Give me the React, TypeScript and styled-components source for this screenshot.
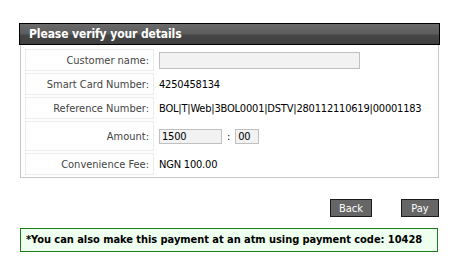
import React from 'react';
import styled, { createGlobalStyle } from 'styled-components';

const GlobalStyle = createGlobalStyle`
  html, body {
    margin: 0;
    padding: 0;
    background: #fff;
  }
  body {
    font-family: "DejaVu Sans Condensed", "DejaVu Sans", Tahoma, sans-serif;
    font-size: 11px;
    color: #000;
  }
`;

const Page = styled.div`
  width: 421px;
  padding: 23px 0 0 19px;
`;

const Header = styled.div`
  height: 20px;
  border: 1px solid #000;
  background: linear-gradient(#6a6a6a 0%, #5c5c5c 50%, #464646 55%, #3f3f3f 100%);
  color: #fff;
  font-weight: bold;
  font-size: 12px;
  line-height: 20px;
  padding-left: 9px;
  letter-spacing: -0.1px;
`;

const Box = styled.div`
  margin: 0 1px;
  border: 1px solid #c8c8c8;
  border-top: none;
  padding: 4px 3px 2px 4px;
  display: grid;
  grid-template-columns: 129px 1fr;
  column-gap: 5px;
  row-gap: 2px;
`;

const Label = styled.div<{ $tall?: boolean }>`
  border: 1px solid #ececec;
  height: ${p => (p.$tall ? 28 : 20)}px;
  display: flex;
  align-items: center;
  justify-content: flex-end;
  padding-right: 4px;
  color: #444;
`;

const Value = styled.div`
  display: flex;
  align-items: center;
  gap: 5px;
  color: #000;
  letter-spacing: -0.2px;
`;

const Field = styled.div<{ $w: number; $h?: number }>`
  width: ${p => p.$w}px;
  height: ${p => p.$h ?? 14}px;
  border: 1px solid #c0c0c0;
  background: #f2f2f2;
  display: flex;
  align-items: center;
  padding-left: 2px;
  box-sizing: border-box;
`;

const Actions = styled.div`
  display: flex;
  justify-content: flex-end;
  gap: 29px;
  margin: 21px 1px 0 0;
`;

const Button = styled.div<{ $w: number }>`
  width: ${p => p.$w}px;
  height: 18px;
  box-sizing: border-box;
  border: 1px solid #1a1a1a;
  background: #666;
  color: #fff;
  display: flex;
  align-items: center;
  justify-content: center;
  font-size: 11px;
`;

const Notice = styled.div`
  margin: 11px 2px 0 1px;
  height: 22px;
  border: 1px solid #1b7d1b;
  background: #efffef;
  font-weight: bold;
  font-size: 11px;
  line-height: 22px;
  padding-left: 5px;
  letter-spacing: -0.05px;
`;

export default function App() {
  return (
    <Page>
      <GlobalStyle />
      <Header>Please verify your details</Header>
      <Box>
        <Label>Customer name:</Label>
        <Value>
          <Field $w={201} $h={17} />
        </Value>
        <Label>Smart Card Number:</Label>
        <Value>4250458134</Value>
        <Label>Reference Number:</Label>
        <Value>BOL|T|Web|3BOL0001|DSTV|280112110619|00001183</Value>
        <Label $tall>Amount:</Label>
        <Value>
          <Field $w={63} $h={15}>1500</Field>
          :
          <Field $w={24} $h={15}>00</Field>
        </Value>
        <Label>Convenience Fee:</Label>
        <Value>NGN 100.00</Value>
      </Box>
      <Actions>
        <Button $w={42}>Back</Button>
        <Button $w={38}>Pay</Button>
      </Actions>
      <Notice>*You can also make this payment at an atm using payment code: 10428</Notice>
    </Page>
  );
}
